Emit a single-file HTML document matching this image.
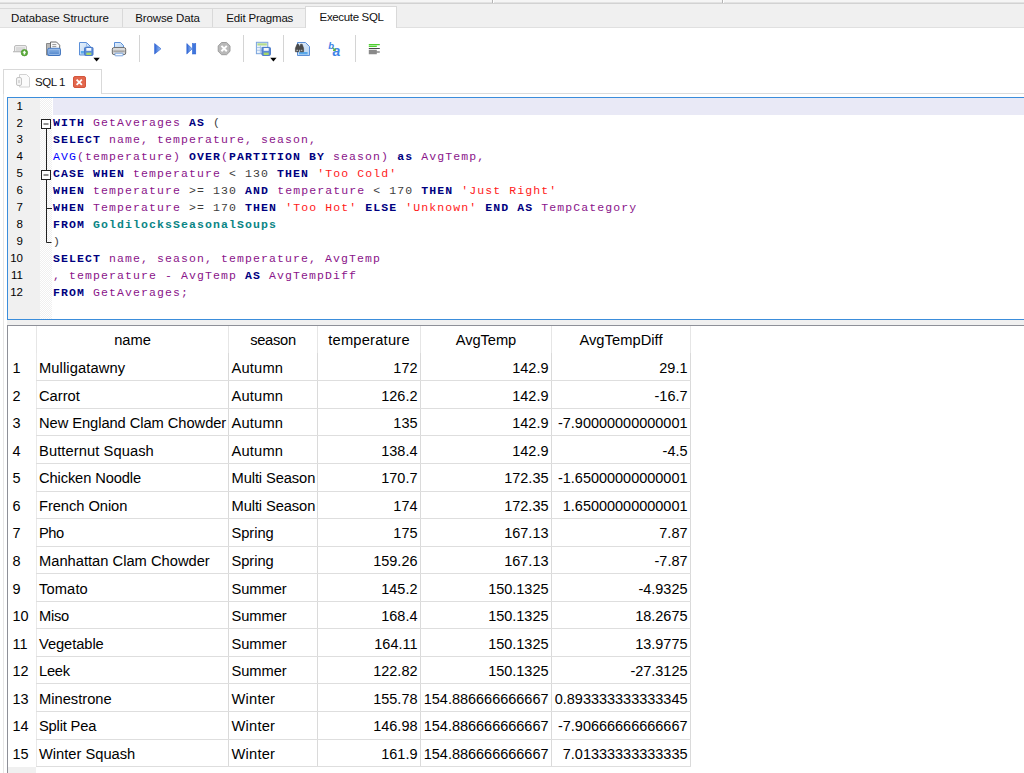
<!DOCTYPE html>
<html lang="en"><head><meta charset="utf-8"><title>DB Browser for SQLite - Execute SQL</title>
<style>
html,body{margin:0;padding:0}
body{width:1024px;height:773px;position:relative;overflow:hidden;background:#fff;font-family:"Liberation Sans",sans-serif;color:#000}
div,span,svg{position:absolute;box-sizing:border-box}
span.k,span.i,span.s,span.t,span.f,span.o{position:static}
.tabtxt{font-size:11.5px;line-height:14px;white-space:nowrap;color:#111}
.sep{width:1px;background:#d4d4d4;top:35px;height:27px}
.ln{left:8px;width:15px;text-align:right;font-size:11.5px;line-height:17px;height:17px;color:#000}
.cl{left:53px;font-family:"Liberation Mono",monospace;font-size:11.5px;letter-spacing:1.1px;line-height:17px;height:17px;white-space:pre;color:#000}
.k{color:#00007f;font-weight:bold}
.i{color:#8a148a}
.s{color:#ff1a1a}
.t{color:#0a8585;font-weight:bold}
.f{color:#0000ff}
.o{color:#3c3c3c}
.hd{font-size:14.7px;line-height:18px;height:18px;text-align:center;white-space:nowrap;top:331px}
.c{font-size:14.7px;line-height:18px;height:18px;white-space:nowrap}
.n{font-size:14.47px;line-height:18px;height:18px;white-space:nowrap;text-align:right}
.hl{left:36px;width:655px;height:1px;background:#dedede}
.vl{width:1px;top:353px;height:414px;background:#dadada}
.vh{width:1px;top:326px;height:27px;background:#e6e6e6}
</style></head><body>

<div style="left:0;top:0;width:1024px;height:28px;background:#f0f0f0"></div>
<div style="left:0;top:0;width:1024px;height:2px;background:#f5f5f5"></div>
<div style="left:0;top:2px;width:1024px;height:1px;background:#e2e2e2"></div>
<div style="left:0;top:3px;width:1024px;height:1px;background:#d2d2d2"></div>
<div style="left:722px;top:0;width:1px;height:3px;background:#b4b4b4"></div>
<div style="left:723px;top:0;width:1px;height:3px;background:#fff"></div>
<div style="left:492px;top:0;width:1px;height:3px;background:#b4b4b4"></div>
<div style="left:493px;top:0;width:1px;height:3px;background:#fff"></div>
<div style="left:0;top:27px;width:1024px;height:1px;background:#e0e0e0"></div>
<div style="left:0;top:8px;width:306px;height:19px;border-top:1px solid #d9d9d9"></div>
<div style="left:122px;top:8px;width:1px;height:19px;background:#d9d9d9"></div>
<div style="left:212px;top:8px;width:1px;height:19px;background:#d9d9d9"></div>
<div class="tabtxt" style="left:11px;top:11px;letter-spacing:-0.068px">Database Structure</div>
<div class="tabtxt" style="left:135.3px;top:11px;letter-spacing:-0.125px">Browse Data</div>
<div class="tabtxt" style="left:226.3px;top:11px;letter-spacing:-0.179px">Edit Pragmas</div>
<div style="left:305px;top:6px;width:92px;height:22px;background:#fff;border:1px solid #d9d9d9;border-bottom:none"></div>
<div class="tabtxt" style="left:319.6px;top:9.5px;letter-spacing:-0.346px">Execute SQL</div>
<div style="left:3px;top:93px;width:1px;height:680px;background:#e6e6e6"></div>
<div class="sep" style="left:139px"></div>
<div class="sep" style="left:243px"></div>
<div class="sep" style="left:283px"></div>
<div class="sep" style="left:355px"></div>
<svg style="left:0;top:36px" width="400" height="30" viewBox="0 36 400 30">
<defs>
<linearGradient id="gb" x1="0" y1="0" x2="0" y2="1"><stop offset="0" stop-color="#8fb6e6"/><stop offset="1" stop-color="#4c82c8"/></linearGradient>
<linearGradient id="gp" x1="0" y1="0" x2="1" y2="1"><stop offset="0" stop-color="#e6f0fb"/><stop offset="1" stop-color="#b4d2f2"/></linearGradient>
<linearGradient id="gg" x1="0" y1="0" x2="0" y2="1"><stop offset="0" stop-color="#f2f2f2"/><stop offset="0.5" stop-color="#c4c4c4"/><stop offset="1" stop-color="#e0e0e0"/></linearGradient>
<linearGradient id="gt" x1="0" y1="0" x2="1" y2="0"><stop offset="0" stop-color="#2d63d6"/><stop offset="1" stop-color="#a5c9f3"/></linearGradient>
</defs>
<!-- new tab -->
<path d="M14.5 51.5 V47 q0 -1.5 1.5 -1.5 h9 q1.5 0 1.5 1.5 V51.5" fill="#dadada" stroke="#bdbdbd"/><path d="M15.5 51 V47 q0 -0.5 0.5 -0.5 h9 q0.5 0 0.5 0.5 V51" fill="none" stroke="#ececec"/>
<path d="M13 51.7 H27.5" stroke="#bcbcbc" stroke-width="1.2"/>
<circle cx="24.4" cy="52.7" r="3.2" fill="#5aaa3a" stroke="#4a9a2c" stroke-width="0.7"/>
<path d="M24.4 50.6 l1.9 2.1 h-1.1 v1.8 h-1.6 v-1.8 h-1.1 z" fill="#fff"/>
<!-- open folder -->
<path d="M46.5 43.5 h4 v11.5 h-4 z" fill="#b9b9b9" stroke="#8a8a8a"/>
<path d="M50.5 42 h6 l3.2 3.2 v9 h-9.2 z" fill="#fafafa" stroke="#6c6c6c"/>
<path d="M52.3 44.6 h4 M52.3 46.6 h4" stroke="#8c8c8c" stroke-width="0.9"/>
<rect x="47.8" y="48.3" width="12.6" height="7.2" rx="1" fill="url(#gb)" stroke="#3f73bd"/><rect x="48.8" y="49.3" width="10.6" height="5.2" rx="0.5" fill="none" stroke="#a4c4ec" stroke-width="0.8"/>
<!-- save file -->
<path d="M79.5 42.5 h7 l4 4 v8.5 h-11 z" fill="url(#gp)" stroke="#5b8fd8"/><path d="M86.5 42.5 v4 h4" fill="none" stroke="#8db4e8" stroke-width="0.8"/>
<rect x="80.8" y="51" width="4" height="2.6" fill="#5aa9ea"/>
<rect x="84.6" y="47.4" width="8.4" height="8" rx="0.8" fill="#5a8bd6" stroke="#4677c8"/>
<rect x="86.3" y="48" width="5" height="2.8" fill="#f4f7fc"/>
<rect x="86.3" y="52.6" width="5" height="2.4" fill="#a6d76a"/>
<path d="M93.4 57.8 h6.4 l-3.2 3.8 z" fill="#000"/>
<!-- print -->
<path d="M114.5 48 v-5.5 h6 l3 3 v2.5 z" fill="url(#gp)" stroke="#5b8fd8"/>
<rect x="112.3" y="47.6" width="13.4" height="7" rx="1.6" fill="url(#gg)" stroke="#6a6a6a"/>
<path d="M113.5 51.2 h11" stroke="#8c8c8c" stroke-width="0.8"/>
<rect x="115" y="53.2" width="8" height="2.6" rx="0.6" fill="#f6f9fd" stroke="#5d92d8" stroke-width="0.8"/>
<!-- play -->
<path d="M154.6 43.6 v10.4 l6.4 -5.2 z" fill="url(#gt)" stroke="#2a60d2" stroke-width="0.6"/>
<!-- step -->
<path d="M186.8 43.6 v10.4 l5.4 -5.2 z" fill="url(#gt)" stroke="#2a60d2" stroke-width="0.6"/>
<rect x="192.4" y="43.6" width="3.4" height="10.4" fill="#3f76dc" stroke="#2a60d2" stroke-width="0.5"/>
<!-- stop -->
<path d="M221.6 42.5 h5 l3.4 3.4 v5.4 l-3.4 3.4 h-5 l-3.4 -3.4 v-5.4 z" fill="#b9b9b9" stroke="#9d9d9d"/>
<path d="M221.4 45.9 l5.4 5.4 M226.8 45.9 l-5.4 5.4" stroke="#fff" stroke-width="2"/>
<!-- save results -->
<rect x="256.4" y="42.3" width="11.4" height="11.4" fill="#eaf2fb" stroke="#7aa4dc"/>
<rect x="257.4" y="43.3" width="9.4" height="2.2" fill="#b5dc8a"/>
<path d="M257 47.5 h10.4 M257 50.3 h10.4 M260.4 45.5 v8" stroke="#9fbfe6" stroke-width="0.8"/>
<rect x="262" y="47.4" width="8.4" height="8" rx="0.8" fill="#5a8bd6" stroke="#4677c8"/>
<rect x="263.7" y="48" width="5" height="2.8" fill="#f4f7fc"/>
<rect x="263.7" y="52.6" width="5" height="2.4" fill="#a6d76a"/>
<path d="M270.2 57.8 h6.4 l-3.2 3.8 z" fill="#000"/>
<!-- find -->
<path d="M297.5 42.5 h8 l4 4 v9 h-12 z" fill="url(#gp)" stroke="#5b8fd8"/>
<rect x="299" y="52" width="8.6" height="2.4" fill="#5aa9ea"/>
<path d="M295.4 51.8 v-3.6 l1.6 -4 h1.6 l0.6 2 h0.8 l0.6 -2 h1.6 l1.4 4 v3.6 h-3.4 v-2.4 h-1.4 v2.4 z" fill="#4a4a4a" stroke="#333" stroke-width="0.5"/>
<path d="M296.4 50.3 h1.6 M300.8 50.3 h1.6" stroke="#cfcfcf" stroke-width="1"/>
<!-- replace -->
<text x="328.2" y="48.6" font-family="Liberation Sans, sans-serif" font-size="9.5" font-weight="bold" font-style="italic" fill="#3f85e8">b</text>
<text x="332.6" y="55.6" font-family="Liberation Sans, sans-serif" font-size="14" font-weight="bold" font-style="italic" fill="#3f85e8">a</text>
<path d="M332.4 47.6 l2.6 2.6 M335.2 48.2 v2.2 h-2.2" stroke="#58b04a" stroke-width="1.1" fill="none"/>
<!-- comment -->
<path d="M368.8 44.7 h11 M368.8 46.4 h8" stroke="#4fcf30" stroke-width="1.25"/>
<path d="M368.8 48.5 h11" stroke="#484848" stroke-width="1"/>
<path d="M368.8 50.5 h8 M368.8 52 h11 M368.8 53.5 h8" stroke="#8a8a8a" stroke-width="1.3"/>
</svg>

<div style="left:3px;top:93px;width:1021px;height:1px;background:#dcdcdc"></div>
<div style="left:3px;top:69px;width:99px;height:25px;background:#fff;border:1px solid #d9d9d9;border-bottom:none"></div>
<div class="tabtxt" style="left:35px;top:75px;letter-spacing:-0.464px">SQL 1</div>
<div style="left:73px;top:75.5px;width:12.5px;height:12.5px;background:#e2674d;border:1px solid #d4553c;border-radius:2px"></div>
<svg style="left:73px;top:75.5px" width="12.5" height="12.5" viewBox="0 0 12.5 12.5"><path d="M3.6 3.6 L8.9 8.9 M8.9 3.6 L3.6 8.9" stroke="#fff" stroke-width="1.8" stroke-linecap="butt" fill="none"/></svg>
<svg style="left:15px;top:73px" width="16" height="16" viewBox="0 0 16 16"><path d="M4.5 1.5 h7 l3 3 v9.5 h-10 z" fill="#fbfbfb" stroke="#d2d2d2"/><rect x="1.5" y="4.5" width="5" height="8" rx="1.5" fill="#f4f4f4" stroke="#c4c4c4"/><path d="M3.5 7 v3 M4.5 7 v3" stroke="#c8c8c8" stroke-width="0.6"/></svg>
<div style="left:7px;top:97px;width:1020px;height:223px;border:1px solid #3b8ddb;background:#fff"></div>
<div style="left:8px;top:98px;width:32px;height:221px;background:#f0f0f0"></div>
<div style="left:40px;top:98px;width:12px;height:221px;background:repeating-conic-gradient(#f0f0f0 0 25%,#ffffff 0 50%) 0 0/2px 2px"></div>
<div style="left:53px;top:98px;width:971px;height:17px;background:#e9e9f6"></div>
<svg style="left:39.5px;top:98px" width="13" height="221" viewBox="0 0 13 221"><g stroke="#222" stroke-width="1" fill="none"><path d="M6.5 31 V144.5 H11.5"/><path d="M6.5 110.5 H12"/><rect x="1.5" y="21.5" width="9" height="9" fill="#fff"/><path d="M3.5 26 H8.5" /><rect x="1.5" y="72.5" width="9" height="9" fill="#fff"/><path d="M3.5 77 H8.5"/></g></svg>
<div class="ln" style="top:97.60px">1</div>
<div class="ln" style="top:114.53px">2</div>
<div class="cl" style="top:114.28px"><span class="k">WITH</span> <span class="i">GetAverages</span> <span class="k">AS</span> <span class="o">(</span></div>
<div class="ln" style="top:131.46px">3</div>
<div class="cl" style="top:131.21px"><span class="k">SELECT</span> <span class="i">name, temperature, season,</span></div>
<div class="ln" style="top:148.39px">4</div>
<div class="cl" style="top:148.14px"><span class="f">AVG</span><span class="i">(temperature)</span> <span class="k">OVER</span><span class="i">(</span><span class="k">PARTITION BY</span> <span class="i">season)</span> <span class="k">as</span> <span class="i">AvgTemp,</span></div>
<div class="ln" style="top:165.32px">5</div>
<div class="cl" style="top:165.07px"><span class="k">CASE WHEN</span> <span class="i">temperature</span> <span class="o">&lt; 130</span> <span class="k">THEN</span> <span class="s">'Too Cold'</span></div>
<div class="ln" style="top:182.25px">6</div>
<div class="cl" style="top:182.00px"><span class="k">WHEN</span> <span class="i">temperature</span> <span class="o">&gt;= 130</span> <span class="k">AND</span> <span class="i">temperature</span> <span class="o">&lt; 170</span> <span class="k">THEN</span> <span class="s">'Just Right'</span></div>
<div class="ln" style="top:199.18px">7</div>
<div class="cl" style="top:198.93px"><span class="k">WHEN</span> <span class="i">Temperature</span> <span class="o">&gt;= 170</span> <span class="k">THEN</span> <span class="s">'Too Hot'</span> <span class="k">ELSE</span> <span class="s">'Unknown'</span> <span class="k">END AS</span> <span class="i">TempCategory</span></div>
<div class="ln" style="top:216.11px">8</div>
<div class="cl" style="top:215.86px"><span class="k">FROM</span> <span class="t">GoldilocksSeasonalSoups</span></div>
<div class="ln" style="top:233.04px">9</div>
<div class="cl" style="top:232.79px"><span class="o">)</span></div>
<div class="ln" style="top:249.97px">10</div>
<div class="cl" style="top:249.72px"><span class="k">SELECT</span> <span class="i">name, season, temperature, AvgTemp</span></div>
<div class="ln" style="top:266.90px">11</div>
<div class="cl" style="top:266.65px"><span class="i">, temperature - AvgTemp</span> <span class="k">AS</span> <span class="i">AvgTempDiff</span></div>
<div class="ln" style="top:283.83px">12</div>
<div class="cl" style="top:283.58px"><span class="k">FROM</span> <span class="i">GetAverages;</span></div>
<div style="left:7px;top:320px;width:1017px;height:5px;background:#f0f0f0"></div>
<div style="left:7px;top:325px;width:1020px;height:460px;border:1px solid #8e9098;background:#fff"></div>
<div style="left:8px;top:767px;width:28px;height:6px;background:#f0f0f0"></div>
<div class="vh" style="left:36px"></div>
<div class="vl" style="left:36px;background:#e9e9e9"></div>
<div class="vh" style="left:228px"></div>
<div class="vl" style="left:228px"></div>
<div class="vh" style="left:317px"></div>
<div class="vl" style="left:317px"></div>
<div class="vh" style="left:420px"></div>
<div class="vl" style="left:420px"></div>
<div class="vh" style="left:551px"></div>
<div class="vl" style="left:551px"></div>
<div class="vh" style="left:690px"></div>
<div class="vl" style="left:690px"></div>
<div class="hd" style="left:37px;width:191px;letter-spacing:-0.009px">name</div>
<div class="hd" style="left:229px;width:88px;letter-spacing:-0.290px">season</div>
<div class="hd" style="left:318px;width:102px;letter-spacing:0.216px">temperature</div>
<div class="hd" style="left:421px;width:130px;letter-spacing:-0.085px">AvgTemp</div>
<div class="hd" style="left:552px;width:138px;letter-spacing:0.045px">AvgTempDiff</div>
<div class="hl" style="top:380px"></div>
<div class="n" style="left:12.5px;top:359.02px">1</div>
<div class="c" style="left:39px;top:359.02px;letter-spacing:0.108px">Mulligatawny</div>
<div class="c" style="left:231.5px;top:359.02px;letter-spacing:0.177px">Autumn</div>
<div class="n" style="left:318px;width:99.5px;top:359.02px">172</div>
<div class="n" style="left:421px;width:127.5px;top:359.02px">142.9</div>
<div class="n" style="left:552px;width:135.5px;top:359.02px">29.1</div>
<div class="hl" style="top:408px"></div>
<div class="n" style="left:12.5px;top:386.58px">2</div>
<div class="c" style="left:39px;top:386.58px;letter-spacing:0.001px">Carrot</div>
<div class="c" style="left:231.5px;top:386.58px;letter-spacing:0.177px">Autumn</div>
<div class="n" style="left:318px;width:99.5px;top:386.58px">126.2</div>
<div class="n" style="left:421px;width:127.5px;top:386.58px">142.9</div>
<div class="n" style="left:552px;width:135.5px;top:386.58px">-16.7</div>
<div class="hl" style="top:435px"></div>
<div class="n" style="left:12.5px;top:414.14px">3</div>
<div class="c" style="left:39px;top:414.14px;letter-spacing:-0.058px">New England Clam Chowder</div>
<div class="c" style="left:231.5px;top:414.14px;letter-spacing:0.177px">Autumn</div>
<div class="n" style="left:318px;width:99.5px;top:414.14px">135</div>
<div class="n" style="left:421px;width:127.5px;top:414.14px">142.9</div>
<div class="n" style="left:552px;width:135.5px;top:414.14px">-7.90000000000001</div>
<div class="hl" style="top:463px"></div>
<div class="n" style="left:12.5px;top:441.70px">4</div>
<div class="c" style="left:39px;top:441.70px;letter-spacing:0.083px">Butternut Squash</div>
<div class="c" style="left:231.5px;top:441.70px;letter-spacing:0.177px">Autumn</div>
<div class="n" style="left:318px;width:99.5px;top:441.70px">138.4</div>
<div class="n" style="left:421px;width:127.5px;top:441.70px">142.9</div>
<div class="n" style="left:552px;width:135.5px;top:441.70px">-4.5</div>
<div class="hl" style="top:491px"></div>
<div class="n" style="left:12.5px;top:469.26px">5</div>
<div class="c" style="left:39px;top:469.26px;letter-spacing:-0.121px">Chicken Noodle</div>
<div class="c" style="left:231.5px;top:469.26px;letter-spacing:-0.095px">Multi Season</div>
<div class="n" style="left:318px;width:99.5px;top:469.26px">170.7</div>
<div class="n" style="left:421px;width:127.5px;top:469.26px">172.35</div>
<div class="n" style="left:552px;width:135.5px;top:469.26px">-1.65000000000001</div>
<div class="hl" style="top:518px"></div>
<div class="n" style="left:12.5px;top:496.82px">6</div>
<div class="c" style="left:39px;top:496.82px;letter-spacing:-0.056px">French Onion</div>
<div class="c" style="left:231.5px;top:496.82px;letter-spacing:-0.095px">Multi Season</div>
<div class="n" style="left:318px;width:99.5px;top:496.82px">174</div>
<div class="n" style="left:421px;width:127.5px;top:496.82px">172.35</div>
<div class="n" style="left:552px;width:135.5px;top:496.82px">1.65000000000001</div>
<div class="hl" style="top:546px"></div>
<div class="n" style="left:12.5px;top:524.38px">7</div>
<div class="c" style="left:39px;top:524.38px;letter-spacing:-0.459px">Pho</div>
<div class="c" style="left:231.5px;top:524.38px;letter-spacing:-0.057px">Spring</div>
<div class="n" style="left:318px;width:99.5px;top:524.38px">175</div>
<div class="n" style="left:421px;width:127.5px;top:524.38px">167.13</div>
<div class="n" style="left:552px;width:135.5px;top:524.38px">7.87</div>
<div class="hl" style="top:573px"></div>
<div class="n" style="left:12.5px;top:551.94px">8</div>
<div class="c" style="left:39px;top:551.94px;letter-spacing:0.005px">Manhattan Clam Chowder</div>
<div class="c" style="left:231.5px;top:551.94px;letter-spacing:-0.057px">Spring</div>
<div class="n" style="left:318px;width:99.5px;top:551.94px">159.26</div>
<div class="n" style="left:421px;width:127.5px;top:551.94px">167.13</div>
<div class="n" style="left:552px;width:135.5px;top:551.94px">-7.87</div>
<div class="hl" style="top:601px"></div>
<div class="n" style="left:12.5px;top:579.50px">9</div>
<div class="c" style="left:39px;top:579.50px;letter-spacing:0.117px">Tomato</div>
<div class="c" style="left:231.5px;top:579.50px;letter-spacing:-0.054px">Summer</div>
<div class="n" style="left:318px;width:99.5px;top:579.50px">145.2</div>
<div class="n" style="left:421px;width:127.5px;top:579.50px">150.1325</div>
<div class="n" style="left:552px;width:135.5px;top:579.50px">-4.9325</div>
<div class="hl" style="top:628px"></div>
<div class="n" style="left:12.5px;top:607.06px">10</div>
<div class="c" style="left:39px;top:607.06px;letter-spacing:-0.300px">Miso</div>
<div class="c" style="left:231.5px;top:607.06px;letter-spacing:-0.054px">Summer</div>
<div class="n" style="left:318px;width:99.5px;top:607.06px">168.4</div>
<div class="n" style="left:421px;width:127.5px;top:607.06px">150.1325</div>
<div class="n" style="left:552px;width:135.5px;top:607.06px">18.2675</div>
<div class="hl" style="top:656px"></div>
<div class="n" style="left:12.5px;top:634.62px">11</div>
<div class="c" style="left:39px;top:634.62px;letter-spacing:-0.075px">Vegetable</div>
<div class="c" style="left:231.5px;top:634.62px;letter-spacing:-0.054px">Summer</div>
<div class="n" style="left:318px;width:99.5px;top:634.62px">164.11</div>
<div class="n" style="left:421px;width:127.5px;top:634.62px">150.1325</div>
<div class="n" style="left:552px;width:135.5px;top:634.62px">13.9775</div>
<div class="hl" style="top:683px"></div>
<div class="n" style="left:12.5px;top:662.18px">12</div>
<div class="c" style="left:39px;top:662.18px;letter-spacing:-0.289px">Leek</div>
<div class="c" style="left:231.5px;top:662.18px;letter-spacing:-0.054px">Summer</div>
<div class="n" style="left:318px;width:99.5px;top:662.18px">122.82</div>
<div class="n" style="left:421px;width:127.5px;top:662.18px">150.1325</div>
<div class="n" style="left:552px;width:135.5px;top:662.18px">-27.3125</div>
<div class="hl" style="top:711px"></div>
<div class="n" style="left:12.5px;top:689.74px">13</div>
<div class="c" style="left:39px;top:689.74px;letter-spacing:0.005px">Minestrone</div>
<div class="c" style="left:231.5px;top:689.74px;letter-spacing:0.194px">Winter</div>
<div class="n" style="left:318px;width:99.5px;top:689.74px">155.78</div>
<div class="n" style="left:421px;width:127.5px;top:689.74px">154.886666666667</div>
<div class="n" style="left:552px;width:135.5px;top:689.74px">0.893333333333345</div>
<div class="hl" style="top:739px"></div>
<div class="n" style="left:12.5px;top:717.30px">14</div>
<div class="c" style="left:39px;top:717.30px;letter-spacing:-0.176px">Split Pea</div>
<div class="c" style="left:231.5px;top:717.30px;letter-spacing:0.194px">Winter</div>
<div class="n" style="left:318px;width:99.5px;top:717.30px">146.98</div>
<div class="n" style="left:421px;width:127.5px;top:717.30px">154.886666666667</div>
<div class="n" style="left:552px;width:135.5px;top:717.30px">-7.90666666666667</div>
<div class="hl" style="top:766px"></div>
<div class="n" style="left:12.5px;top:744.86px">15</div>
<div class="c" style="left:39px;top:744.86px;letter-spacing:-0.010px">Winter Squash</div>
<div class="c" style="left:231.5px;top:744.86px;letter-spacing:0.194px">Winter</div>
<div class="n" style="left:318px;width:99.5px;top:744.86px">161.9</div>
<div class="n" style="left:421px;width:127.5px;top:744.86px">154.886666666667</div>
<div class="n" style="left:552px;width:135.5px;top:744.86px">7.01333333333335</div>
</body></html>
